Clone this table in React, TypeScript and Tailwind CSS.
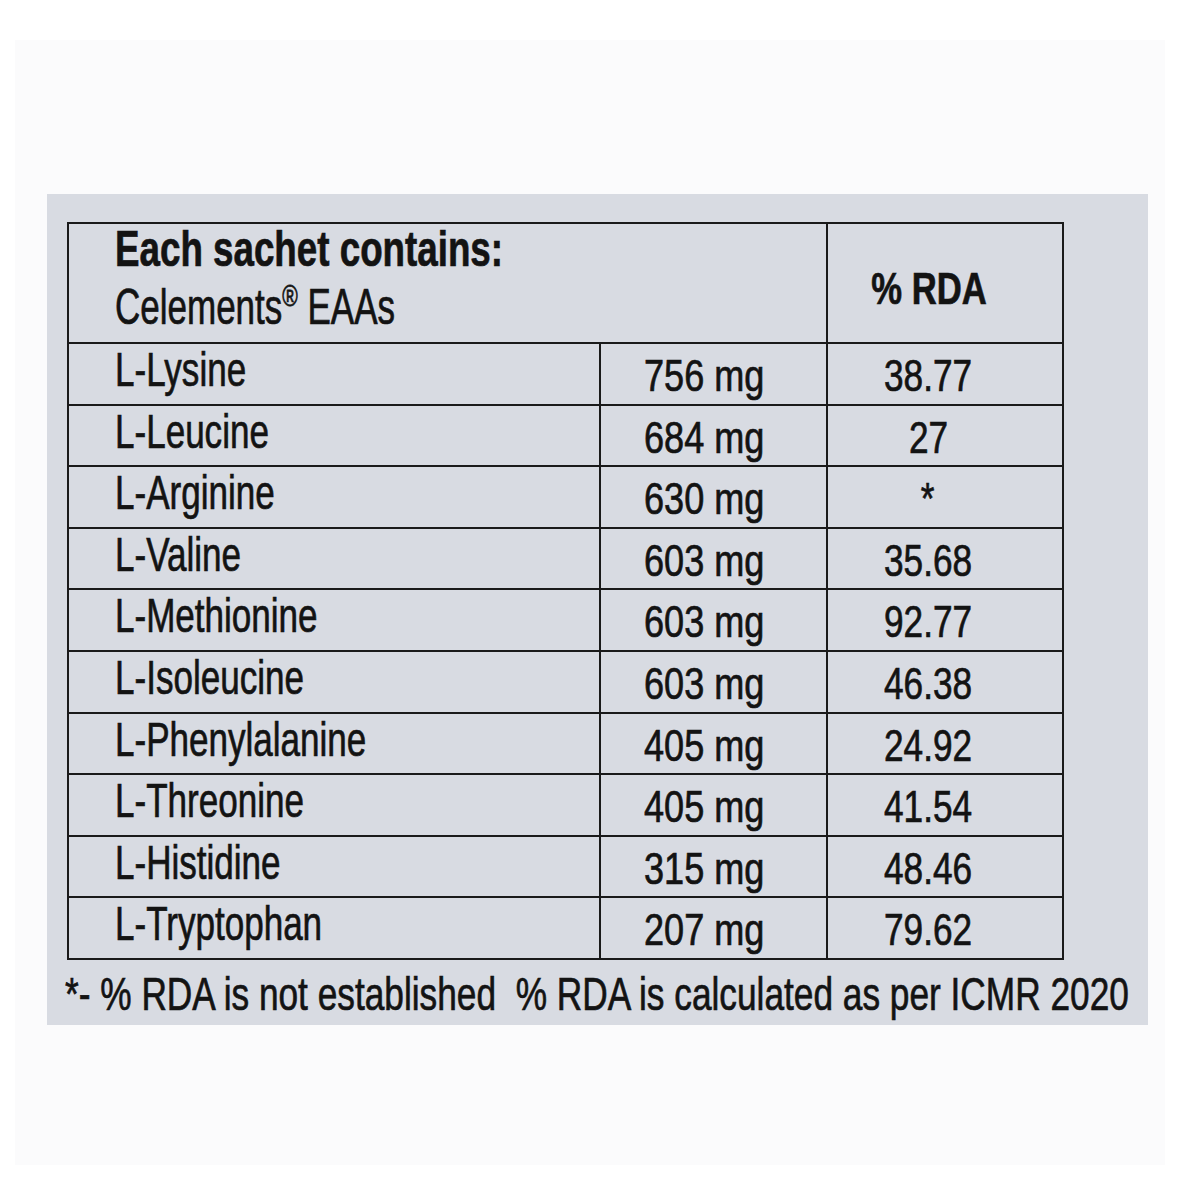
const rows = [
  { name: 'L-Lysine', amount: '756 mg', rda: '38.77' },
  { name: 'L-Leucine', amount: '684 mg', rda: '27' },
  { name: 'L-Arginine', amount: '630 mg', rda: '*' },
  { name: 'L-Valine', amount: '603 mg', rda: '35.68' },
  { name: 'L-Methionine', amount: '603 mg', rda: '92.77' },
  { name: 'L-Isoleucine', amount: '603 mg', rda: '46.38' },
  { name: 'L-Phenylalanine', amount: '405 mg', rda: '24.92' },
  { name: 'L-Threonine', amount: '405 mg', rda: '41.54' },
  { name: 'L-Histidine', amount: '315 mg', rda: '48.46' },
  { name: 'L-Tryptophan', amount: '207 mg', rda: '79.62' },
];

export default function App() {
  return (
    <div className="w-[1200px] h-[1200px] bg-white pt-[40px] pl-[15px] font-['Liberation_Sans',Arial,sans-serif] text-[#131313]">
      <div className="w-[1150px] h-[1125px] bg-[#fbfbfc] pt-[154px] pl-[32px]">
        <div className="w-[1101px] h-[831px] overflow-hidden bg-[#d8dbe2] pt-[28px] pl-[20px] [-webkit-text-stroke:0.7px_#131313]">
          <div className="w-[997px] border-[2.5px] border-[#1a1a1a]">
            {/* header */}
            <div className="flex h-[118px]">
              <div className="w-[757px] pl-[46px]">
                <span className="inline-block whitespace-nowrap origin-left scale-x-[0.735] text-[50px] leading-[50px] font-bold">
                  Each sachet contains:
                </span>
                <div className="mt-[8px]">
                  <span className="inline-block whitespace-nowrap origin-left scale-x-[0.7] text-[50px] leading-[50px]">
                    Celements<sup className="text-[30px] -top-[0.6em]">®</sup> EAAs
                  </span>
                </div>
              </div>
              <div className="flex-1 border-l-[2.5px] border-[#1a1a1a] flex justify-center items-start pt-[42px] pr-[32px]">
                <span className="inline-block whitespace-nowrap origin-center scale-x-[0.77] text-[45px] leading-[45px] font-bold">
                  % RDA
                </span>
              </div>
            </div>
            {/* rows */}
            {rows.map(r => (
              <div key={r.name} className="flex h-[61.6px] border-t-[2.5px] border-[#1a1a1a]">
                <div className="w-[530px] pl-[46px] pt-[2px]">
                  <span className="inline-block whitespace-nowrap origin-left scale-x-[0.73] text-[48px] leading-[48px]">
                    {r.name}
                  </span>
                </div>
                <div className="w-[227px] border-l-[2.5px] border-[#1a1a1a] pl-[43px] pt-[10px]">
                  <span className="inline-block whitespace-nowrap origin-left scale-x-[0.82] text-[44px] leading-[44px]">
                    {r.amount}
                  </span>
                </div>
                <div className="flex-1 border-l-[2.5px] border-[#1a1a1a] flex justify-center items-start pt-[10px] pr-[34px]">
                  <span className="inline-block whitespace-nowrap origin-center scale-x-[0.8] text-[44px] leading-[44px]">
                    {r.rda}
                  </span>
                </div>
              </div>
            ))}
          </div>
          <div className="mt-[10px] -ml-[2px]">
            <span className="inline-block whitespace-pre origin-left scale-x-[0.75] text-[47px] leading-[47px]">
              {'*- % RDA is not established  % RDA is calculated as per ICMR 2020'}
            </span>
          </div>
        </div>
      </div>
    </div>
  );
}
